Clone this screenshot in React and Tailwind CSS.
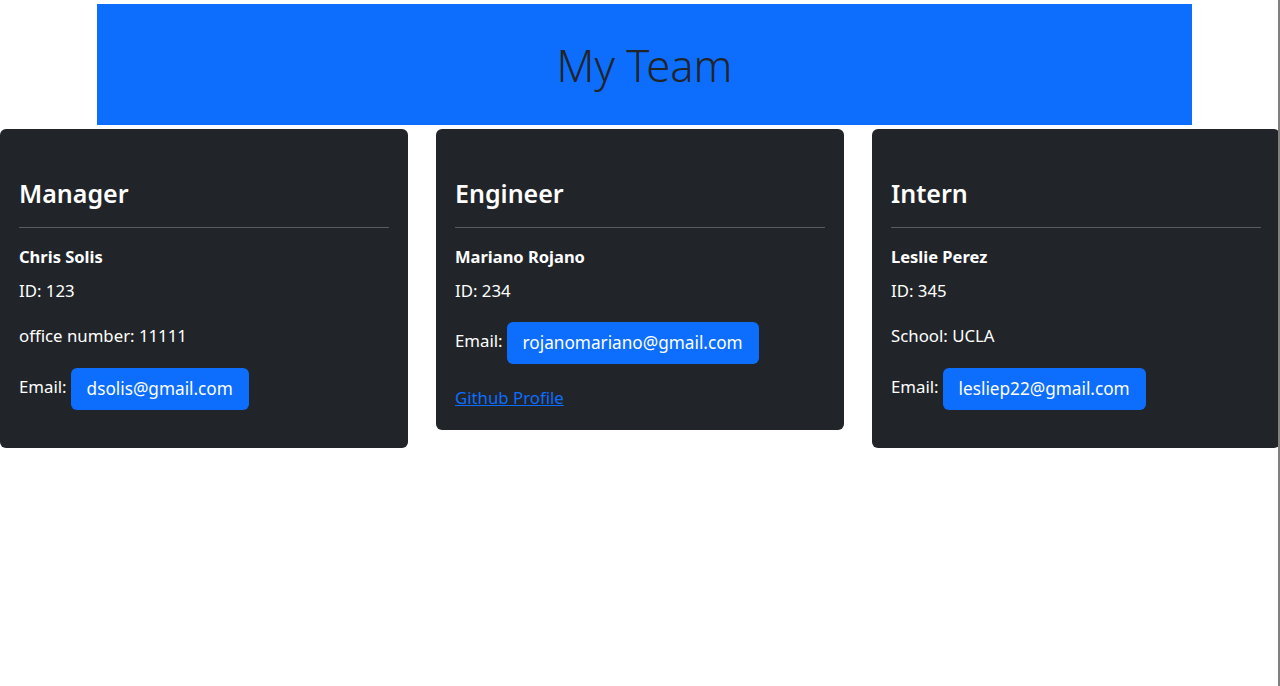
import React from 'react';

const team = [
  {
    role: 'Manager',
    name: 'Chris Solis',
    id: 123,
    extra: 'office number: 11111',
    email: 'dsolis@gmail.com',
  },
  {
    role: 'Engineer',
    name: 'Mariano Rojano',
    id: 234,
    email: 'rojanomariano@gmail.com',
    github: 'Github Profile',
  },
  {
    role: 'Intern',
    name: 'Leslie Perez',
    id: 345,
    extra: 'School: UCLA',
    email: 'lesliep22@gmail.com',
  },
];

const EmailRow = ({ email, className }) => (
  <div className={`flex items-center ${className}`}>
    <span className="mr-[4px] mb-[4px]">Email:</span>
    <a
      href={`mailto:${email}`}
      className="h-[42px] px-[16px] flex items-center rounded-[6px] bg-[#0d6efd] text-white text-[17.2px]"
    >
      {email}
    </a>
  </div>
);

const MemberCard = ({ member }) => (
  <div
    className={`w-[408px] shrink-0 bg-[#212529] text-white rounded-[6px] px-[19px] pt-[44px] ${
      member.github ? 'pb-[20px]' : 'pb-[38px]'
    }`}
  >
    <h3 className="h-[40px] flex items-center text-[25px] font-semibold leading-none">
      {member.role}
    </h3>
    <div className="mt-[14px] h-px bg-[#5a5c5f]" />
    <div className="mt-[17px] h-[24px] flex items-center font-bold text-[16.5px]">{member.name}</div>
    <div className="mt-[10px] h-[24px] flex items-center">ID: {member.id}</div>
    {member.extra && (
      <div className="mt-[21px] h-[24px] flex items-center">{member.extra}</div>
    )}
    <EmailRow email={member.email} className={member.extra ? 'mt-[20px]' : 'mt-[19px]'} />
    {member.github && (
      <div className="mt-[22px] h-[24px] flex items-center">
        <a href="#" className="text-[#0d6efd] underline">
          {member.github}
        </a>
      </div>
    )}
  </div>
);

export default function App() {
  return (
    <div
      className="relative w-[1280px] h-[686px] bg-white overflow-hidden text-[16.8px] text-[#212529]"
      style={{ fontFamily: '"Noto Sans", "Open Sans", sans-serif' }}
    >
      <div className="pt-[4px] pl-[97px]">
        <div className="w-[1095px] h-[121px] bg-[#0d6efd] flex items-center justify-center">
          <h1 className="text-[43.5px] font-light leading-none pt-[3px] text-[#212529]">My Team</h1>
        </div>
      </div>
      <div className="mt-[4px] flex items-start gap-[28px]">
        {team.map((m) => (
          <MemberCard key={m.role} member={m} />
        ))}
      </div>
      <div className="absolute top-0 right-0 w-[2px] h-full bg-[#808080]" />
    </div>
  );
}
